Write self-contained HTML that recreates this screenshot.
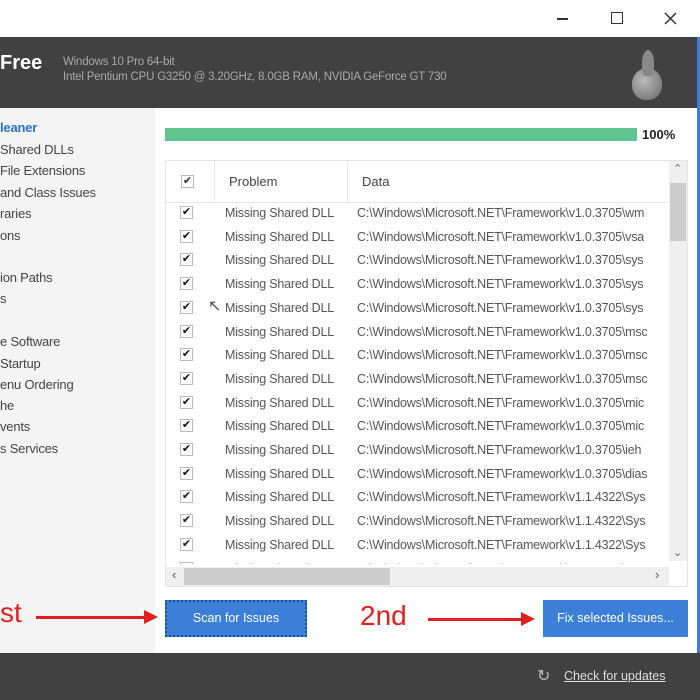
<!DOCTYPE html><html><head><style>
*{margin:0;padding:0;box-sizing:border-box}
body{width:700px;height:700px;overflow:hidden;background:#fff;font-family:"Liberation Sans",sans-serif;position:relative;color:#333}
.a{position:absolute}
.side div{position:absolute;left:0;font-size:13px;color:#444;letter-spacing:-0.2px}
.row{position:absolute;left:165px;width:503px;height:24px;font-size:12.5px;color:#555;letter-spacing:-0.2px}
.row .c{position:absolute;left:15px;top:5px;width:13px;height:13px;border:1px solid #bbb;font-size:11px;line-height:11px;text-align:center;color:#111;letter-spacing:0}
.row .p{position:absolute;left:60px;top:5px}
.row .d{position:absolute;left:192px;top:5px;white-space:nowrap}
</style></head><body>
<div class="a" style="left:0;top:0;width:700px;height:37px;background:#fff"></div>
<div class="a" style="left:557px;top:18px;width:11px;height:1.5px;background:#333"></div>
<div class="a" style="left:611px;top:12px;width:12px;height:12px;border:1.5px solid #333"></div>
<svg class="a" style="left:664px;top:12px" width="13" height="13"><path d="M1 1L12 12M12 1L1 12" stroke="#333" stroke-width="1.5"/></svg>
<div class="a" style="left:0;top:37px;width:700px;height:71px;background:#414141"></div>
<div class="a" style="left:0;top:52px;font-size:20px;font-weight:bold;color:#fff">Free</div>
<div class="a" style="left:63px;top:55px;font-size:11.5px;color:#a8a8a8;line-height:15px;letter-spacing:-0.2px">Windows 10 Pro 64-bit<br>Intel Pentium CPU G3250 @ 3.20GHz, 8.0GB RAM, NVIDIA GeForce GT 730</div>
<div class="a" style="left:632px;top:68px;width:30px;height:32px;border-radius:50% 50% 45% 45%;background:radial-gradient(circle at 40% 40%,#bbb,#666)"></div>
<div class="a" style="left:642px;top:50px;width:12px;height:26px;border-radius:50% 50% 30% 30%;background:#888"></div>
<div class="a" style="left:697px;top:37px;width:3px;height:616px;background:#3b7fd4"></div>
<div class="a" style="left:0;top:108px;width:155px;height:545px;background:#f4f4f4"></div>
<div class="side">
<div style="top:120px;color:#2a72d0;font-weight:bold">leaner</div>
<div style="top:142px">Shared DLLs</div>
<div style="top:163px">File Extensions</div>
<div style="top:185px">and Class Issues</div>
<div style="top:206px">raries</div>
<div style="top:228px">ons</div>
<div style="top:270px">ion Paths</div>
<div style="top:291px">s</div>
<div style="top:334px">e Software</div>
<div style="top:356px">Startup</div>
<div style="top:377px">enu Ordering</div>
<div style="top:398px">he</div>
<div style="top:419px">vents</div>
<div style="top:441px">s Services</div>
</div>
<div class="a" style="left:165px;top:128px;width:472px;height:13px;background:#5fc58f"></div>
<div class="a" style="left:642px;top:127px;font-size:13px;font-weight:bold;color:#222">100%</div>
<div class="a" style="left:165px;top:160px;width:523px;height:427px;border:1px solid #e4e4e4;background:#fff;overflow:hidden">
<div class="a" style="left:48px;top:0;width:1px;height:41px;background:#e8e8e8"></div>
<div class="a" style="left:181px;top:0;width:1px;height:41px;background:#e8e8e8"></div>
<div class="a" style="left:0;top:41px;width:502px;height:1px;background:#e8e8e8"></div>
<div class="a" style="left:15px;top:14px;width:13px;height:13px;border:1px solid #bbb;font-size:11px;line-height:11px;text-align:center">✔</div>
<div class="a" style="left:63px;top:13px;font-size:13px;color:#444">Problem</div>
<div class="a" style="left:196px;top:13px;font-size:13px;color:#444">Data</div>
<div class="a" style="left:503px;top:0;width:18px;height:400px;background:#f0f0f0"></div>
<div class="a" style="left:504px;top:22px;width:16px;height:58px;background:#cdcdcd"></div>
<div class="a" style="left:507px;top:1px;font-size:11px;color:#666">⌃</div>
<div class="a" style="left:507px;top:385px;font-size:11px;color:#666">⌄</div>
<div class="a" style="left:0;top:406px;width:503px;height:19px;background:#f0f0f0"></div>
<div class="a" style="left:18px;top:407px;width:206px;height:17px;background:#cdcdcd"></div>
<div class="a" style="left:6px;top:406px;font-size:13px;color:#555">‹</div>
<div class="a" style="left:489px;top:406px;font-size:13px;color:#555">›</div>
</div>
<div id="rows"></div>
<script>
var d=["wm","vsa","sys","sys","sys","msc","msc","msc","mic","mic","ieh","dias"];
var h="";
for(var i=0;i<16;i++){var y=201+i*23.7;var v=i<12?"1.0.3705\\"+d[i]:"1.1.4322\\Sys";
h+='<div class="row" style="top:'+y+'px;'+(i==15?'height:7px;overflow:hidden':'')+'"><div class="c">✔</div><div class="p">Missing Shared DLL</div><div class="d">C:\\Windows\\Microsoft.NET\\Framework\\v'+v+'</div></div>';}
document.getElementById("rows").innerHTML=h;
</script>
<div class="a" style="left:208px;top:296px;font-size:16px;color:#555">↖</div>
<div class="a" style="left:165px;top:600px;width:142px;height:37px;background:#3b7fd8;border:2px dotted #1c4f9a;color:#fff;font-size:12.5px;text-align:center;line-height:33px">Scan for Issues</div>
<div class="a" style="left:543px;top:600px;width:145px;height:37px;background:#3b7fd8;color:#fff;font-size:12.5px;text-align:center;line-height:37px">Fix selected Issues...</div>
<div class="a" style="left:0;top:597px;font-size:28px;color:#e02020">st</div>
<div class="a" style="left:36px;top:616px;width:110px;height:3px;background:#e02020"></div>
<div class="a" style="left:144px;top:610px;border-left:14px solid #e02020;border-top:7px solid transparent;border-bottom:7px solid transparent"></div>
<div class="a" style="left:360px;top:600px;font-size:28px;color:#e02020">2nd</div>
<div class="a" style="left:428px;top:618px;width:95px;height:3px;background:#e02020"></div>
<div class="a" style="left:521px;top:612px;border-left:14px solid #e02020;border-top:7px solid transparent;border-bottom:7px solid transparent"></div>
<div class="a" style="left:0;top:653px;width:700px;height:47px;background:#414141"></div>
<div class="a" style="left:537px;top:666px;font-size:16px;color:#bbb">↻</div>
<div class="a" style="left:564px;top:669px;font-size:12.5px;color:#ddd;text-decoration:underline">Check for updates</div>
</body></html>
